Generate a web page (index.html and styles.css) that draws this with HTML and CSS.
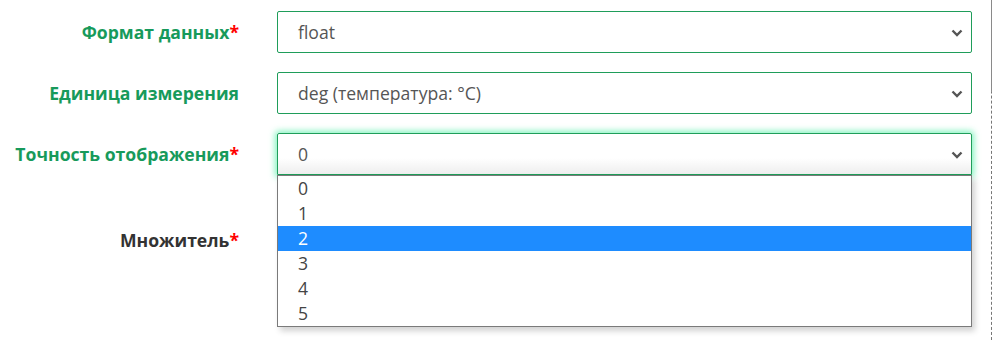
FILE: index.html
```html
<!DOCTYPE html>
<html lang="ru">
<head>
<meta charset="utf-8">
<title>Форма</title>
<link rel="stylesheet" href="styles.css">
</head>
<body>
<div class="page">
  <form class="form">
    <div class="row">
      <label class="label ok">Формат данных<span class="req">*</span></label>
      <div class="select">
        <span class="value">float</span>
        <svg class="chev" width="12" height="8" viewBox="0 0 12 8"><path d="M1.5 1.5 L6 6 L10.5 1.5" fill="none" stroke="#555" stroke-width="2.4"/></svg>
      </div>
    </div>
    <div class="row">
      <label class="label ok">Единица измерения</label>
      <div class="select">
        <span class="value">deg (температура: °C)</span>
        <svg class="chev" width="12" height="8" viewBox="0 0 12 8"><path d="M1.5 1.5 L6 6 L10.5 1.5" fill="none" stroke="#555" stroke-width="2.4"/></svg>
      </div>
    </div>
    <div class="row">
      <label class="label ok">Точность отображения<span class="req">*</span></label>
      <div class="field">
        <div class="select focus">
          <span class="value">0</span>
          <svg class="chev" width="12" height="8" viewBox="0 0 12 8"><path d="M1.5 1.5 L6 6 L10.5 1.5" fill="none" stroke="#555" stroke-width="2.4"/></svg>
        </div>
        <ul class="list">
          <li class="opt">0</li>
          <li class="opt">1</li>
          <li class="opt active">2</li>
          <li class="opt">3</li>
          <li class="opt">4</li>
          <li class="opt">5</li>
        </ul>
      </div>
    </div>
    <div class="row">
      <label class="label plain">Множитель<span class="req">*</span></label>
      <div class="select hidden-field"></div>
    </div>
  </form>
</div>
</body>
</html>
```

FILE: styles.css
```css
html, body {
  margin: 0;
  padding: 0;
  background: #fff;
}
body {
  font-family: "Open Sans", "Noto Sans", "Liberation Sans", sans-serif;
  font-size: 17.6px;
  color: #555;
}
.page {
  width: 992px;
  height: 340px;
  border-right: 1px dashed #777;
  box-sizing: border-box;
  position: relative;
}
.page::before {
  content: "";
  position: absolute;
  right: -1px;
  top: 0;
  width: 1px;
  height: 92px;
  background: #8a8a8a;
}
.form {
  padding-top: 11px;
  display: flex;
  flex-direction: column;
  gap: 19px;
}
.row {
  display: grid;
  grid-template-columns: 239px 695px;
  column-gap: 38px;
  align-items: start;
}
.label {
  text-align: right;
  font-weight: 700;
  font-size: 17.6px;
  line-height: 24px;
  padding-top: 9px;
  white-space: nowrap;
}
.label.ok { color: #179a5b; }
.label.plain { color: #333; padding-top: 34px; }
.req { color: #f00; }
.field { position: relative; }
.select {
  height: 42px;
  box-sizing: border-box;
  border: 1px solid #1f9d5a;
  border-radius: 2px;
  display: flex;
  align-items: center;
  justify-content: space-between;
  padding: 0 8px 0 20px;
  background: #fff;
}
.value {
  color: #555;
  font-size: 17.6px;
  line-height: 24px;
}
.chev { display: block; margin-top: 1px; }
.select.focus {
  border-color: #1f9d5a;
  box-shadow: 0 0 6px 2px rgba(50, 235, 150, 0.6);
  background: linear-gradient(to bottom, #fff 0, #fff 60%, #eeeeee 100%);
  border-radius: 2px 2px 0 0;
}
.list {
  position: absolute;
  left: 0;
  top: 42px;
  width: 695px;
  margin: 0;
  padding: 0;
  list-style: none;
  background: #fff;
  border: 1px solid #7a7a7a;
  box-sizing: border-box;
  box-shadow: 3px 4px 6px rgba(0, 0, 0, 0.18);
  z-index: 2;
}
.opt {
  height: 25px;
  line-height: 25px;
  padding-left: 20px;
  color: #444;
  font-size: 17.6px;
}
.opt.active {
  background: #1e8cff;
  color: #fff;
}
.hidden-field { border-color: #ddd; }
```
